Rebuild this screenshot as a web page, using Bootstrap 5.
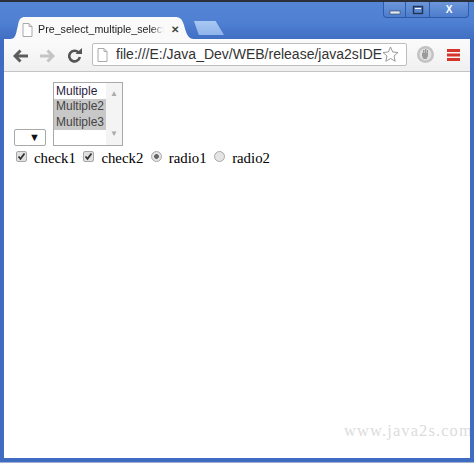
<!DOCTYPE html>
<html lang="en">
<head>
<meta charset="utf-8">
<title>Pre_select_multiple_select</title>
<link href="https://cdn.jsdelivr.net/npm/bootstrap@5.3.0/dist/css/bootstrap.min.css" rel="stylesheet">
<style>
html,body{height:463px;overflow:hidden}
body{background:#fff;font-family:"Liberation Sans",Arial,sans-serif}
.win-frame{width:474px;height:463px;background:linear-gradient(#5484d4 2px,#4f80d2 20px,#3f6cc0 40px,#3f6cc0);border-top:2px solid #2b2f3a;padding:0 4px 4px 4px;border-bottom:1px solid #9fb0d0}
.win-top{height:15px;padding-right:1px}
.win-ctrls{width:86px;height:16px;border:1px solid #2f5aa5;border-top:0;border-radius:0 0 4px 4px;background:linear-gradient(#6d97da,#4d7ccc)}
.win-ctrls>div{border-right:1px solid #2f5aa5}
.win-ctrls>div:last-child{border-right:0}
.c-min{width:22px}.c-max{width:24px}.c-close{flex:1;color:#fff;font:700 10px "Liberation Sans",sans-serif}
.tab-strip{height:22px;padding-left:6px}
.tab-on{width:184px;height:22px;background:#fafafa;clip-path:path("M0 22 C6 22 6 16 8 8 C9 2 11 0 15 0 L165 0 C170 0 172 2 174 8 C176 16 178 22 184 22 Z");padding:3px 0 0 12px}
.tab-ic{flex:none;margin-right:5px}
.tab-title{font-size:10.7px;width:126px;flex:none;overflow:hidden;white-space:nowrap;color:#222;-webkit-mask-image:linear-gradient(90deg,#000 90%,transparent)}
.tab-x{font:700 10px "Liberation Sans",sans-serif;color:#444;width:12px;margin-left:7px;flex:none}
.tab-new{width:30px;height:14px;margin:4px 0 0 0;background:linear-gradient(#a9c8f2,#8fb4ea);clip-path:polygon(0 0,72% 0,100% 100%,16% 100%)}
.tool-bar{height:33px;background:linear-gradient(#fbfbfb,#f0f0f0);border-bottom:1px solid #c4c4c4;padding:0 2px 0 9px}
.nav-ico{width:27px}
.nav-last{width:25px}
.omni{width:315px;height:23px;background:#fff;border:1px solid #bdbdbd;border-radius:2px;padding:0 3px 0 4px;font-size:14px;color:#333;white-space:nowrap}
.omni-text{width:266px;overflow:hidden;margin-left:8px;line-height:21px;flex:none}
.omni-star{flex:none}
.ext-ico{width:20px}
.page-view{background:#fff;height:387px;padding:10px 0 0 10px;font-family:"Liberation Serif","Times New Roman",serif;font-size:14.8px;color:#000}
.pick-one{width:32px;height:17px;border:1px solid #a9a9a9;border-radius:2px;background:#fff;padding-right:5px;font-size:11px;line-height:1;color:#111}
.pick-many{width:70px;height:64px;margin-left:7px;border:1px solid #a9a9a9;background:#fff;font:12px/15.5px "Liberation Sans",Arial,sans-serif;color:#2a1a40}
.opt-col{width:52px;padding-top:1px}
.opt-col div{padding-left:2px;height:15.5px}
.opt-sel{background:#c8c8c8;color:#444}
.scroll-col{flex:1;background:#f4f4f4;font-size:8px;color:#aaa;padding:3px 0}
.ctl-line{margin-top:4px;height:16px;padding-left:2px}
.ctl-line input{appearance:none;-webkit-appearance:none;flex:none;width:11px;height:11px;margin:0 7px 3px 0;background:#e0e0e0 center/100% 100% no-repeat;border:1px solid #a8a8a8}
.box-c{border-radius:2px;background-image:url("data:image/svg+xml,%3Csvg xmlns='http://www.w3.org/2000/svg' viewBox='0 0 9 9'%3E%3Cpath d='M1.5 4.500l2 2.300 4-5.300' fill='none' stroke='%23333' stroke-width='1.8'/%3E%3C/svg%3E")!important}
.ctl-line input.dot{border-radius:50%;background:#e4e4e4}
.ctl-line input.dot-on{background:radial-gradient(circle,#666 0 2px,#e4e4e4 2.800px)}
.ctl-line label{margin-right:7.500px;line-height:16px;white-space:nowrap}
.water{position:absolute;right:4px;top:421px;width:126px;overflow:hidden;white-space:nowrap;font:16.5px "Liberation Serif",serif;letter-spacing:1.1px;color:#dcdcdc}
</style>
</head>
<body class="m-0 position-relative">
<div class="win-frame d-flex flex-column">
  <div class="win-top d-flex justify-content-end">
    <div class="win-ctrls d-flex">
      <div class="c-min d-flex align-items-center justify-content-center"><svg width="12" height="10" viewBox="0 0 12 10"><rect x="1" y="6" width="10" height="3" fill="#dfe8f6" stroke="#345" stroke-width=".6"/></svg></div>
      <div class="c-max d-flex align-items-center justify-content-center"><svg width="12" height="10" viewBox="0 0 12 10"><rect x="1.500" y="1.500" width="9" height="7" fill="none" stroke="#22344f" stroke-width="1.400"/><rect x="3" y="3" width="6" height="1" fill="#fff"/></svg></div>
      <div class="c-close d-flex align-items-center justify-content-center">X</div>
    </div>
  </div>
  <div class="tab-strip d-flex">
    <div class="tab-on d-flex align-items-center">
      <svg width="11" height="14" viewBox="0 0 11 14" class="tab-ic"><path d="M1 .5h6l3 3v10H1z" fill="#fff" stroke="#aaa"/><path d="M7 .5v3h3" fill="none" stroke="#aaa"/></svg>
      <div class="tab-title">Pre_select_multiple_select</div>
      <div class="tab-x">&#10005;</div>
    </div>
    <div class="tab-new"></div>
  </div>
  <div class="tool-bar d-flex align-items-center">
    <div class="nav-ico"><svg width="15" height="14" viewBox="0 0 15 14"><path d="M7.500 1.500L2 7l5.500 5.500M3 7h12" fill="none" stroke="#5c5c5c" stroke-width="3"/></svg></div>
    <div class="nav-ico"><svg width="15" height="14" viewBox="0 0 15 14"><path d="M7.500 1.500L13 7l-5.500 5.500M12 7H0" fill="none" stroke="#c4c4c4" stroke-width="3"/></svg></div>
    <div class="nav-last"><svg width="15" height="15" viewBox="0 0 15 15"><path d="M11.500 4.500A5.300 5.300 0 1 0 12.800 9" fill="none" stroke="#555" stroke-width="2.600"/><path d="M8.500 6h6.500V0z" fill="#555"/></svg></div>
    <div class="omni d-flex align-items-center">
      <svg width="11" height="14" viewBox="0 0 11 14" class="flex-none"><path d="M1 .5h6l3 3v10H1z" fill="#fff" stroke="#aaa"/><path d="M7 .5v3h3" fill="none" stroke="#aaa"/></svg>
      <div class="omni-text">file:///E:/Java_Dev/WEB/release/java2sIDE</div>
      <svg width="17" height="17" viewBox="0 0 17 17" class="omni-star"><path d="M8.500 1l2.200 5 5.300.5-4 3.500 1.200 5.300-4.700-2.800-4.700 2.800 1.200-5.300-4-3.500 5.300-.5z" fill="#fff" stroke="#999"/></svg>
    </div>
    <div class="ext-ico ms-2 d-flex justify-content-center"><svg width="19" height="19" viewBox="0 0 19 19"><circle cx="9.500" cy="9.500" r="8.500" fill="#c2c2c2"/><circle cx="9.500" cy="9.500" r="6" fill="#e2e2e2"/><path d="M6 8h1V5h1.500v3h.5V4h1.500v4h.5V5H12v6l-1.500 3h-3L6 11z" fill="#9a9a9a"/></svg></div>
    <div class="d-flex justify-content-center ms-auto me-2"><svg width="13" height="12" viewBox="0 0 13 12"><path d="M0 0h13v3H0zM0 4.500h13v3H0zM0 9h13v3H0z" fill="#d6352b"/></svg></div>
  </div>
  <div class="page-view">
    <div class="d-flex align-items-end">
      <div class="pick-one d-flex align-items-center justify-content-end">&#9660;</div>
      <div class="pick-many d-flex">
        <div class="opt-col">
          <div>Multiple</div>
          <div class="opt-sel">Multiple2</div>
          <div class="opt-sel">Multiple3</div>
        </div>
        <div class="scroll-col d-flex flex-column justify-content-between align-items-center"><span>&#9650;</span><span>&#9660;</span></div>
      </div>
    </div>
    <div class="ctl-line d-flex align-items-center">
      <input type="checkbox" class="box-c" id="c1" checked><label for="c1">check1</label>
      <input type="checkbox" class="box-c" id="c2" checked><label for="c2">check2</label>
      <input type="radio" class="dot dot-on" name="r" id="r1" checked><label for="r1">radio1</label>
      <input type="radio" class="dot" name="r2" id="r2"><label for="r2">radio2</label>
    </div>
  </div>
</div>
<div class="water">www.java2s.com</div>
<script src="https://cdn.jsdelivr.net/npm/bootstrap@5.3.0/dist/js/bootstrap.bundle.min.js"></script>
</body>
</html>
